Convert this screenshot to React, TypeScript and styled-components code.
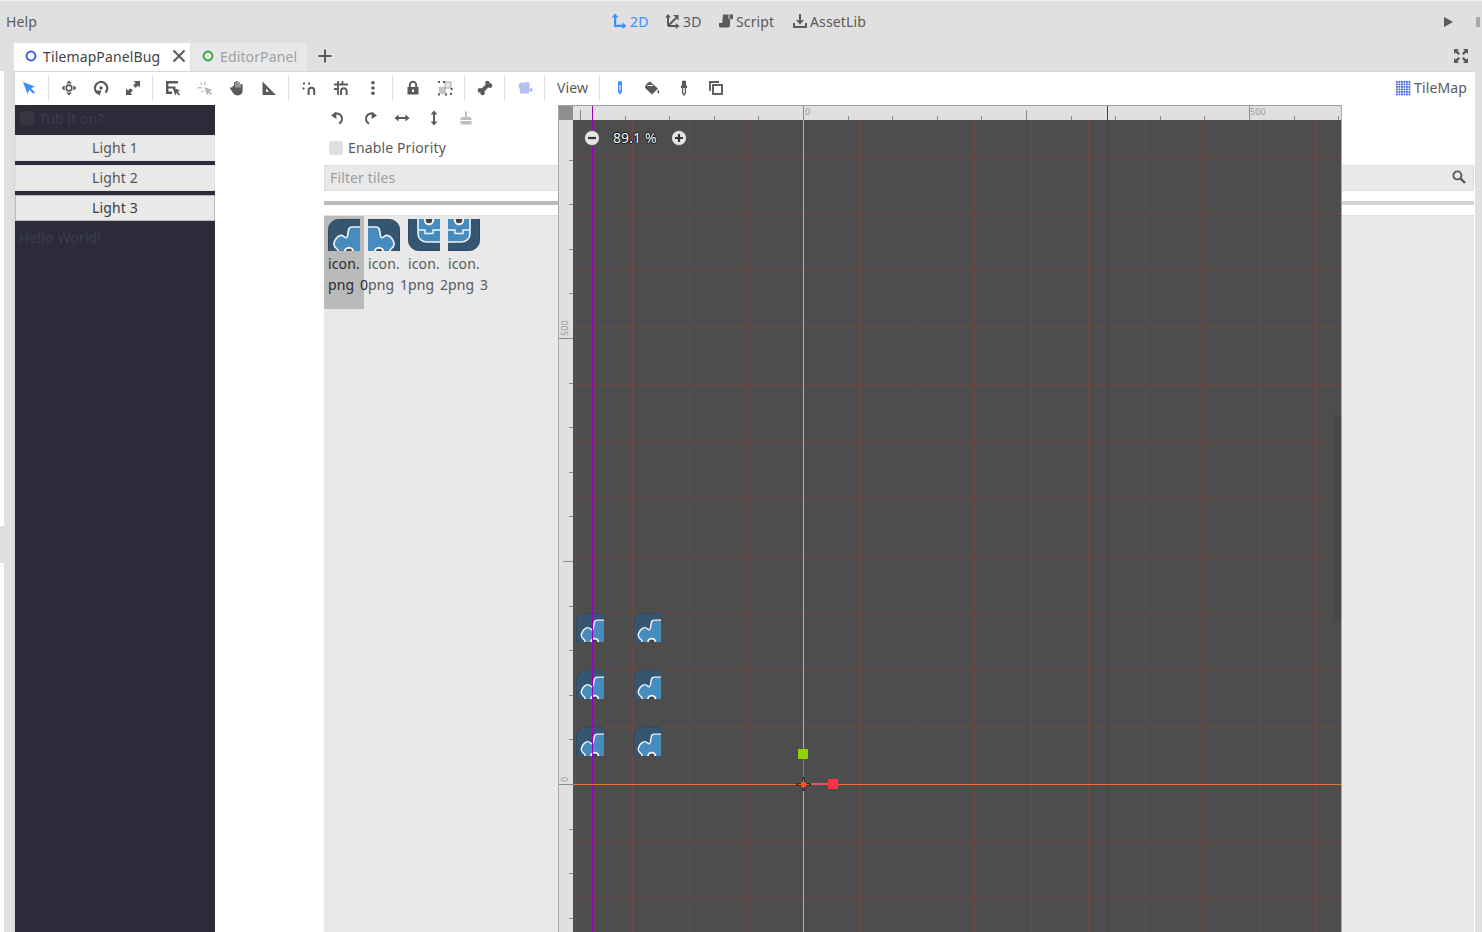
import React from "react";
import styled, { createGlobalStyle } from "styled-components";

const Global = createGlobalStyle`
  html, body { margin: 0; padding: 0; background: #e0e0e0; }
  body { font-family: "Noto Sans", "Liberation Sans", sans-serif; font-size: 14px; letter-spacing: 0.13px; color: #5a5a5a; overflow: hidden; }
`;

const Page = styled.div`
  width: 1482px; height: 932px; display: flex; flex-direction: column; overflow: hidden;
  background: #e0e0e0; border-top: 1px solid #f2f2f2; box-sizing: border-box;
`;
const MenuBar = styled.div`
  height: 42px; box-sizing: border-box; padding-bottom: 2px; display: grid; grid-template-columns: 611px auto 1fr; align-items: center; flex: none;
`;
const MenuLabel = styled.span`padding-left: 6px;`;
const Workspaces = styled.div`display: flex; align-items: center;`;
const Workspace = styled.div<{ $active?: boolean; $w: number }>`
  display: flex; align-items: center; gap: ${p => (p.$active ? 3 : 2)}px; width: ${p => p.$w}px; flex: none;
  color: ${p => (p.$active ? "#3d8dff" : "#5a5a5a")};
`;
const PlayArea = styled.div`display: flex; justify-content: flex-end; align-items: center; padding: 2px 2px 0 0; gap: 20px;`;
const ScrollStub = styled.div`width: 4px; height: 10px; background: #a8a8a8;`;

const TabBar = styled.div`height: 28px; display: flex; align-items: stretch; padding-left: 14px; flex: none;`;
const Tab = styled.div<{ $active?: boolean; $w: number }>`
  width: ${p => p.$w}px; display: flex; align-items: center; box-sizing: border-box; padding: 0 0 2px 11px; gap: 6px;
  background: ${p => (p.$active ? "#ffffff" : "#e8e8e8")};
  color: ${p => (p.$active ? "#444" : "#a0a0a0")};
  margin-right: 1px;
`;
const TabClose = styled.span`margin-left: 5px; display: flex;`;
const AddTab = styled.div`width: 34px; display: flex; align-items: center; justify-content: center; padding-bottom: 2px;`;
const Expand = styled.div`margin-left: auto; margin-right: 13px; display: flex; align-items: center; padding-bottom: 2px;`;

const Body = styled.div`flex: 1; display: flex; min-height: 0;`;
const DockStrip = styled.div`width: 4px; margin-right: 10px; display: flex; flex-direction: column; flex: none;`;
const DockWhite = styled.div<{ $h?: number }>`
  background: #ffffff;
  ${p => (p.$h ? `height: ${p.$h}px;` : "flex: 1;")}
`;
const DockTab = styled.div`background: #e0e0e0; height: 37px;`;
const Editor = styled.div`
  width: 1461px; background: #fff; border-top: 1px solid #d6d6d6; border-left: 1px solid #d6d6d6;
  display: flex; flex-direction: column; box-sizing: border-box;
`;
const Toolbar = styled.div`height: 33px; box-sizing: border-box; padding: 0 8px 2px 0; display: flex; align-items: center; flex: none;`;
const ToolButton = styled.div<{ $w?: number }>`
  width: ${p => p.$w ?? 32}px; height: 28px; display: flex; align-items: center; justify-content: center; flex: none;
`;
const LeadButton = styled(ToolButton)`width: 30px; box-sizing: border-box; padding-right: 2px;`;
const ToolSep = styled.div`width: 1px; height: 26px; background: #e2e2e2; margin: 0 4px 0 3px; flex: none;`;
const ViewMenu = styled.div`width: 47px; text-align: center; flex: none;`;
const NodeLabel = styled.div`margin-left: auto; display: flex; align-items: center; gap: 3px;`;

const MainRow = styled.div`flex: 1; display: flex; min-height: 0;`;
const GameView = styled.div`width: 200px; flex: none; background: #2b2b39; display: flex; flex-direction: column;`;
const GameCheck = styled.div`height: 26px; margin-bottom: 4px; display: flex; align-items: center; padding-left: 5px; gap: 5px; color: #3d3d49;`;
const GameBox = styled.div`width: 14px; height: 14px; border-radius: 3px; background: #363642;`;
const GameButton = styled.div<{ $hover?: boolean }>`
  height: 26px; margin-bottom: 4px; box-sizing: border-box; background: #e9e9e9; text-align: center; line-height: 24px;
  border: 1px solid ${p => (p.$hover ? "#bcbcbc" : "#e2e2e6")};
  color: ${p => (p.$hover ? "#3c3c3c" : "#555")};
`;
const Hello = styled.div`padding: 3px 4px; color: #3d3d49;`;
const Gutter = styled.div`width: 109px; flex: none;`;

const TilePanel = styled.div`flex: 1; margin-right: 1px; position: relative; display: flex; flex-direction: column; min-width: 0;`;
const IconRow = styled.div`height: 28px; margin: -1px 0 1px -2px; display: flex; align-items: center; flex: none;`;
const CheckRow = styled.div`height: 28px; margin-top: 1px; display: flex; align-items: center; gap: 5px; padding-left: 5px; flex: none;`;
const CheckBox = styled.div`width: 14px; height: 14px; border-radius: 3px; background: #e0e0e0;`;
const CheckText = styled.span`margin-top: -2px;`;
const Filter = styled.div`
  height: 26px; margin-top: 3px; box-sizing: border-box; background: #e9e9e9; border: 1px solid #dedede;
  display: flex; align-items: center; justify-content: space-between; padding: 0 6px 2px 5px; color: #9c9c9c; flex: none;
`;
const Split = styled.div`height: 4px; margin-top: 10px; background: linear-gradient(90deg, #bcbcbc 0, #bcbcbc 234px, #d4d4d4 234px); flex: none;`;
const ItemList = styled.div`
  flex: 1; margin-top: 10px; background: #e9e9e9; border-top: 1px solid #dedede;
  display: flex; align-items: flex-start;
`;
const Item = styled.div<{ $selected?: boolean }>`
  width: 40px; height: 93px; flex: none; box-sizing: border-box; padding: 3px 0 0 4px; white-space: nowrap; line-height: 21px; word-spacing: 2px;
  background: ${p => (p.$selected ? "#bababa" : "transparent")};
  color: ${p => (p.$selected ? "#2a2a2a" : "#5a5a5a")};
`;
const ItemPic = styled.div`height: 32px; margin-bottom: 2px;`;
const ItemLine = styled.div`height: 21px;`;

const Viewport = styled.div`position: absolute; left: 234px; top: 0; width: 784px; bottom: 0; background: #4d4d4d; overflow: hidden;`;
const CanvasArt = styled.svg`position: absolute; inset: 0; display: block;`;
const CanvasTile = styled.div<{ $x: number; $y: number }>`
  position: absolute; left: ${p => p.$x - 558}px; top: ${p => p.$y - 105}px; width: 28.5px; height: 28.5px;
`;
const Overdraw = styled.svg`position: absolute; inset: 0; display: block;`;
const ZoomBar = styled.div`position: absolute; left: 26px; top: 25px; display: flex; align-items: center; height: 16px;`;
const ZoomText = styled.span`
  width: 71px; padding: 0 0 1px 13px; box-sizing: border-box; color: #fff; letter-spacing: 0.1px;
  text-shadow: 1px 0 0 #111, -1px 0 0 #111, 0 1px 0 #111, 0 -1px 0 #111;
`;

const Svg: React.FC<{ s?: number; children: React.ReactNode }> = ({ s = 16, children }) => (
  <svg width={s} height={s} viewBox="0 0 16 16" style={{ display: "block" }}>{children}</svg>
);
const G = "#5a5a5a", BL = "#3d8dff";

const Arrow = () => <Svg><path d="M2 2 L14 6.4 L10 8.2 L14 12.2 L12.4 13.8 L8.4 9.8 L6.4 14 Z" fill={BL} /></Svg>;
const Move = () => <Svg><path d="M8 .5 L10.8 3.6 H5.2Z M8 15.5 L5.2 12.4 H10.8Z M.5 8 L3.6 5.2 V10.8Z M15.5 8 L12.4 10.8 V5.2Z" fill={G} /><circle cx="8" cy="8" r="2.8" fill="none" stroke={G} strokeWidth="1.7" /></Svg>;
const Rotate = () => <Svg><path d="M5.6 13.8 A6.2 6.2 0 1 1 12.4 12.6" fill="none" stroke={G} strokeWidth="2.2" /><path d="M1.5 10.6 L8.4 10.4 L6.6 15.6 Z" fill={G} /><circle cx="8" cy="8" r="1.7" fill={G} /></Svg>;
const Scale = () => <Svg><path d="M15 1 V7.4 L13 5.4 L10.6 7.8 L8.2 5.4 L10.6 3 L8.6 1Z M1 15 V8.6 L3 10.6 L5.4 8.2 L7.8 10.6 L5.4 13 L7.4 15Z" fill={G} /></Svg>;
const ListSelect = () => <Svg><path d="M1 1 H13 V3.4 H3.4 V6.4 H10.5 V8.6 H3.4 V11.6 H7 V14 H1Z" fill={G} /><path d="M7.6 7.4 L15.4 10.4 L12.6 11.6 L15 14.2 L13.8 15.4 L11.4 12.8 L10.2 15.6Z" fill={G} /></Svg>;
const GhostSelect = () => <Svg><path d="M.5 7 H5 V8.5 H.5Z M7 1.5 H8.5 V5 H7Z M3 3 L4 2.2 L5.6 4.4 L4.6 5.2Z M4 12 L5.6 10 L6.5 10.8 L5 13Z" fill="#c2c2c2" /><path d="M7.5 7 L15.4 10 L12.6 11.2 L15 13.8 L13.8 15 L11.4 12.4 L10 15.4Z" fill="#b4b4b4" /></Svg>;
const Hand = () => <Svg><path d="M3.4 6 Q4.6 5.2 5 6.2 V2.6 Q6 1.6 6.9 2.6 V1.4 Q7.9 .4 8.9 1.4 V2.4 Q9.9 1.6 10.9 2.6 V4.4 Q12.2 3.6 13.6 4.6 V10.6 Q13.6 15.4 8.6 15.4 Q5.2 15.4 3.8 12.8 L.8 8 Q1.6 6.6 3.4 7.8Z" fill={G} /><path d="M6.9 3 V7.6 M8.9 2 V7.6 M10.9 3 V7.6" stroke="#fff" strokeWidth=".7" /></Svg>;
const RulerI = () => <Svg><path fillRule="evenodd" d="M1.5 1.5 L15 15 H1.5Z M5 8.6 V11.8 H8.2Z" fill={G} /></Svg>;
const Snap = () => <Svg><path d="M2 2.5h2v2H2z M7 2.5h2v2H7z M1.5 7.5h2v2h-2z" fill={G} /><path d="M7.6 15 V10.5 A2.8 2.8 0 0 1 13.2 10.5 V15" fill="none" stroke={G} strokeWidth="2" /></Svg>;
const SnapGrid = () => <Svg><path d="M5 1v14 M9.5 1v4 M1 4.5h14 M1 9h5" stroke={G} strokeWidth="1.8" fill="none" /><path d="M8 15 V11 A2.8 2.8 0 0 1 13.6 11 V15" fill="none" stroke={G} strokeWidth="2" /></Svg>;
const Kebab = () => <Svg><circle cx="8" cy="2.8" r="1.8" fill={G} /><circle cx="8" cy="8" r="1.8" fill={G} /><circle cx="8" cy="13.2" r="1.8" fill={G} /></Svg>;
const Lock = () => <Svg><path d="M4.8 7 V5 A3.2 3.2 0 0 1 11.2 5 V7" fill="none" stroke={G} strokeWidth="1.9" /><path fillRule="evenodd" d="M2.5 7 H13.5 V14.5 H2.5Z M7 9.5 V12 H9 V9.5Z" fill={G} /></Svg>;
const Group = () => <Svg><rect x="2" y="7" width="7" height="7" fill="#c4c4c4" /><rect x="8" y="2" width="6" height="6" fill="#e6e6e6" stroke="#9a9a9a" strokeWidth=".8" /><path d="M1 1h2v2H1z M6 1h2v2H6z M13 13h2v2h-2z M1 13.6h2v2H1z M8 13.6h2v2H8z M13.6 8h2v2h-2z" fill={G} /></Svg>;
const Bone = () => <Svg><path d="M4.4 11.6 L11.6 4.4" stroke={G} strokeWidth="4" /><circle cx="3" cy="10.4" r="2.3" fill={G} /><circle cx="5.6" cy="13" r="2.3" fill={G} /><circle cx="10.4" cy="3" r="2.3" fill={G} /><circle cx="13" cy="5.6" r="2.3" fill={G} /></Svg>;
const Camera = () => <Svg><circle cx="5" cy="5.8" r="3.4" fill="#b3c2ee" /><circle cx="10" cy="5" r="3" fill="#b3c2ee" /><path d="M2.4 7 H12 V13.5 H3.4 Z M11.6 9 L15.5 7.5 V12 L11.6 11Z" fill="#b3c2ee" /></Svg>;
const Pencil = () => <Svg><path fillRule="evenodd" d="M6 1.5 Q8 .5 10 1.5 V11.5 L8 15 L6 11.5Z M7.4 5 V10.5 H8.6 V5Z" fill={BL} /></Svg>;
const Bucket = () => <Svg><path d="M6 1.5 L14 8.6 L8 14.5 L.8 7.8 Q2 3 6 1.5Z" fill={G} /><path d="M14 9.5 Q16.4 12.5 14.4 13.6 Q12.6 12.6 14 9.5Z" fill={G} /><path d="M3.4 5.5 L9 5.5 " stroke="#fff" strokeWidth="1" /></Svg>;
const Picker = () => <Svg><path d="M6 1 Q8 0 10 1 V5 L11 6 V8 H5 V6 L6 5Z" fill={G} /><path d="M6.6 8 V12.8 L8 15 L9.4 12.8 V8" fill="none" stroke={G} strokeWidth="1.3" /></Svg>;
const Copy = () => <Svg><path d="M2 11 V2 H11" fill="none" stroke={G} strokeWidth="1.8" /><rect x="5" y="5" width="9" height="9" fill="none" stroke={G} strokeWidth="1.9" /></Svg>;
const RotL = () => <Svg><path d="M4.4 4 A5.2 5.2 0 1 1 9 13.6" fill="none" stroke={G} strokeWidth="2" /><path d="M1 5.6 L6.4 1.6 V9Z" fill={G} /></Svg>;
const RotR = () => <Svg><path d="M11.6 4 A5.2 5.2 0 1 0 7 13.6" fill="none" stroke={G} strokeWidth="2" /><path d="M15 5.6 L9.6 1.6 V9Z" fill={G} /></Svg>;
const FlipH = () => <Svg><path d="M.5 8 L4.6 4.6 V7 H11.4 V4.6 L15.5 8 L11.4 11.4 V9 H4.6 V11.4Z" fill={G} /></Svg>;
const FlipV = () => <Svg><path d="M8 .5 L11.4 4.6 H9 V11.4 H11.4 L8 15.5 L4.6 11.4 H7 V4.6 H4.6Z" fill={G} /></Svg>;
const Brush = () => <Svg><path d="M7 1.5h2V7h3.5L14 10H2L3.5 7H7Z M2.5 11H13.5V14.5H2.5Z" fill="#bebebe" /></Svg>;
const TwoD = () => <Svg><path d="M4 .5 L7.4 4.6 H5.2 V11.8 H11.4 V9.6 L15.5 13 L11.4 16 V14 H3 V4.6 H.8Z" fill={BL} /></Svg>;
const ThreeD = () => <Svg><path d="M3 13 V4 M3 13 H11 M3 13 L11 5" stroke={G} strokeWidth="2" fill="none" /><path d="M3 1 L6 4.6 H0Z M14.5 13 L10.8 16 V10Z M13.6 2 V7.4 L8.2 2Z" fill={G} /></Svg>;
const Script = () => <Svg><path d="M5 1.5 H15 V6 H12 V12 Q12 14.5 9.5 14.5 H2.5 Q1 14.5 1 12.4 V10 H4.2Z" fill={G} /><path d="M11 1.5 V6" stroke="#e0e0e0" strokeWidth="1" /></Svg>;
const Asset = () => <Svg><path d="M7 1 H9 V7 H12 L8 11.4 L4 7 H7Z M1 10 H3 V13 H13 V10 H15 V15 H1Z" fill={G} /></Svg>;
const Play = () => <Svg><path d="M4 3 L13 8 L4 13Z" fill={G} /></Svg>;
const ExpandI = () => <Svg><path d="M1 1 H6 L4.4 2.6 L7 5.4 L5.4 7 L2.6 4.4 L1 6Z M15 1 V6 L13.4 4.4 L10.6 7 L9 5.4 L11.6 2.6 L10 1Z M1 15 V10 L2.6 11.6 L5.4 9 L7 10.6 L4.4 13.4 L6 15Z M15 15 H10 L11.6 13.4 L9 10.6 L10.6 9 L13.4 11.6 L15 10Z" fill={G} /></Svg>;
const Search = () => <Svg><circle cx="6.4" cy="6.4" r="4" fill="none" stroke={G} strokeWidth="1.9" /><path d="M9.4 9.4 L14 14" stroke={G} strokeWidth="2.4" /></Svg>;
const TileMapI = () => (
  <Svg>
    {[1, 3.5, 6, 8.5, 11, 13.5].map(y => [1, 3.5, 6, 8.5, 11, 13.5].map(x => (
      <rect key={`${x}-${y}`} x={x} y={y} width="1.8" height="1.8" fill="#3d64dd" />
    )))}
  </Svg>
);
const Ring: React.FC<{ c: string }> = ({ c }) => <Svg s={12}><circle cx="8" cy="8" r="6" fill="none" stroke={c} strokeWidth="2.6" /></Svg>;
const Close = () => <Svg><path d="M2.5 2.5 L13.5 13.5 M13.5 2.5 L2.5 13.5" stroke={G} strokeWidth="2" /></Svg>;
const Plus = () => <Svg><path d="M8 1.5 V14.5 M1.5 8 H14.5" stroke={G} strokeWidth="2" /></Svg>;
const ZoomMinus = () => <Svg><circle cx="8" cy="8" r="7.4" fill="#e6e6e6" stroke="#333" strokeWidth=".5" /><path d="M4 8 H12" stroke="#333" strokeWidth="2.2" /></Svg>;
const ZoomPlus = () => <Svg><circle cx="8" cy="8" r="7.4" fill="#e6e6e6" stroke="#333" strokeWidth=".5" /><path d="M4 8 H12 M8 4 V12" stroke="#333" strokeWidth="2.2" /></Svg>;

const Glyph: React.FC<{ qx: number; qy: number; size: number }> = ({ qx, qy, size }) => (
  <svg width={size} height={size} viewBox={`${qx * 32} ${qy * 32} 32 32`} style={{ display: "block" }}>
    <rect x=".5" y=".5" width="63" height="63" rx="10" fill="#355570" stroke="#2e4a62" />
    <path
      d="M32 8 H24 Q21 8 20.5 11 L19.5 17 Q18.5 20 16.5 18 Q14 15.5 11 17 Q7.5 19 6 24 Q5.5 27 8 29 L10 31 V46 Q10 55 20 55 H44 Q54 55 54 46 V31 L56 29 Q58.5 27 58 24 Q56.5 19 53 17 Q50 15.5 47.5 18 Q45.5 20 44.5 17 L43.5 11 Q43 8 40 8 Z"
      fill="#478cbf" stroke="#f0f4f8" strokeWidth="1.6" strokeLinejoin="round"
    />
    <path d="M10 43 H17 V46.5 H25 V43 H39 V46.5 H47 V43 H54" fill="none" stroke="#f0f4f8" strokeWidth="1.4" />
    <circle cx="21" cy="33" r="5.2" fill="#f0f4f8" />
    <circle cx="43" cy="33" r="5.2" fill="#f0f4f8" />
    <circle cx="21" cy="33" r="3.2" fill="#414042" />
    <circle cx="43" cy="33" r="3.2" fill="#414042" />
  </svg>
);

const hLines = [156, 213, 270, 327, 384, 441, 498, 556, 613, 670, 727, 841, 898];
const vLines = [575, 632, 689, 746, 860, 917, 974, 1031, 1088, 1145, 1202, 1259, 1316];
const topTicks = Array.from({ length: 18 }, (_, i) => i - 5).map(k => Math.round(803 + k * 44.6));
const leftTicks = Array.from({ length: 18 }, (_, i) => i - 14).map(k => Math.round(784 + k * 44.6));

const tiles = [575.5, 632.6].flatMap(x => [613.2, 670.3, 727.4].map(y => ({ x, y })));

const tools: React.ReactNode[][] = [
  [<Move />, <Rotate />, <Scale />],
  [<ListSelect />, <GhostSelect />, <Hand />, <RulerI />],
  [<Snap />, <SnapGrid />, <Kebab />],
  [<Lock />, <Group />],
  [<Bone />],
  [<Camera />],
];
const paints = [<Pencil />, <Bucket />, <Picker />, <Copy />];
const tileEdit = [<RotL />, <RotR />, <FlipH />, <FlipV />, <Brush />];
const tileItems = [
  { qx: 0, qy: 0, n: "png 0" }, { qx: 1, qy: 0, n: "png 1" }, { qx: 0, qy: 1, n: "png 2" }, { qx: 1, qy: 1, n: "png 3" },
];

export default function App() {
  return (
    <Page>
      <Global />
      <MenuBar>
        <MenuLabel>Help</MenuLabel>
        <Workspaces>
          <Workspace $active $w={54}><TwoD /><span>2D</span></Workspace>
          <Workspace $w={53}><ThreeD /><span>3D</span></Workspace>
          <Workspace $w={74}><Script /><span>Script</span></Workspace>
          <Workspace $w={76}><Asset /><span>AssetLib</span></Workspace>
        </Workspaces>
        <PlayArea><Play /><ScrollStub /></PlayArea>
      </MenuBar>
      <TabBar>
        <Tab $active $w={176}><Ring c="#3d64dd" /><span>TilemapPanelBug</span><TabClose><Close /></TabClose></Tab>
        <Tab $w={116}><Ring c="#3da83d" /><span>EditorPanel</span></Tab>
        <AddTab><Plus /></AddTab>
        <Expand><ExpandI /></Expand>
      </TabBar>
      <Body>
        <DockStrip>
          <DockWhite $h={455} />
          <DockTab />
          <DockWhite />
        </DockStrip>
        <Editor>
          <Toolbar>
            <LeadButton><Arrow /></LeadButton>
            {tools.map((g, i) => (
              <React.Fragment key={i}>
                <ToolSep />
                {g.map((t, j) => <ToolButton key={j}>{t}</ToolButton>)}
              </React.Fragment>
            ))}
            <ToolSep />
            <ViewMenu>View</ViewMenu>
            <ToolSep />
            {paints.map((t, j) => <ToolButton key={j}>{t}</ToolButton>)}
            <NodeLabel><TileMapI /><span>TileMap</span></NodeLabel>
          </Toolbar>
          <MainRow>
            <GameView>
              <GameCheck><GameBox /><span>Tub it on?</span></GameCheck>
              <GameButton>Light 1</GameButton>
              <GameButton>Light 2</GameButton>
              <GameButton $hover>Light 3</GameButton>
              <Hello>Hello World!</Hello>
            </GameView>
            <Gutter />
            <TilePanel>
              <IconRow>{tileEdit.map((t, j) => <ToolButton key={j}>{t}</ToolButton>)}</IconRow>
              <CheckRow><CheckBox /><CheckText>Enable Priority</CheckText></CheckRow>
              <Filter><span>Filter tiles</span><Search /></Filter>
              <Split />
              <ItemList>
                {tileItems.map((t, i) => (
                  <Item key={t.n} $selected={i === 0}>
                    <ItemPic><Glyph qx={t.qx} qy={t.qy} size={32} /></ItemPic>
                    <ItemLine>icon.</ItemLine>
                    <ItemLine>{t.n}</ItemLine>
                  </Item>
                ))}
              </ItemList>
              <Viewport>
                <CanvasArt width="784" height="827" viewBox="558 105 784 827">
                  {hLines.map(y => <rect key={y} x="573" y={y} width="769" height="1" fill="#6c4a41" />)}
                  {vLines.map(x => <rect key={x} x={x} y="120" width="1" height="812" fill="#6c4a41" />)}
                  <rect x="1333" y="415" width="8" height="207" fill="#484848" />
                </CanvasArt>
                {tiles.map(t => (
                  <CanvasTile key={`${t.x}-${t.y}`} $x={t.x} $y={t.y}><Glyph qx={0} qy={0} size={28.5} /></CanvasTile>
                ))}
                <Overdraw width="784" height="827" viewBox="558 105 784 827">
                  <rect x="559" y="106" width="783" height="14" fill="#e0e0e0" />
                  <rect x="559" y="106" width="14" height="826" fill="#e0e0e0" />
                  <rect x="559" y="106" width="14" height="14" fill="#8f8f8f" />
                  <rect x="558" y="105" width="784" height="1" fill="#a0a0a0" />
                  <rect x="558" y="105" width="1" height="827" fill="#a8a8a8" />
                  <rect x="1341" y="105" width="1" height="827" fill="#a8a8a8" />
                  {topTicks.map((x, i) => {
                    const k = i - 5;
                    const major = k % 10 === 0;
                    const mid = !major && k % 5 === 0;
                    const top = major ? 106 : mid ? 110 : 116;
                    return <rect key={x} x={x} y={top} width="1" height={120 - top} fill="#8a8a8a" />;
                  })}
                  {leftTicks.map((y, i) => {
                    const k = i - 14;
                    const major = k % 10 === 0;
                    const mid = !major && k % 5 === 0;
                    const left = major ? 559 : mid ? 563 : 569;
                    return <rect key={y} x={left} y={y} width={573 - left} height="1" fill="#8a8a8a" />;
                  })}
                  <g fontFamily="Noto Sans, sans-serif" fontSize="9" fill="#9a9a9a">
                    <text x="805" y="115">0</text>
                    <text x="1250" y="115">500</text>
                    <text transform="translate(568 336) rotate(-90)">500</text>
                    <text transform="translate(568 782) rotate(-90)">0</text>
                  </g>
                  <rect x="592" y="106" width="1" height="826" fill="#9a00c4" />
                  <rect x="1107" y="106" width="1" height="826" fill="#9a00c4" />
                  <rect x="803" y="120" width="1" height="812" fill="#c4c400" />
                  <rect x="559" y="784" width="14" height="1" fill="#8a8a8a" />
                  <rect x="573" y="784" width="768" height="1" fill="#e8702e" />
                  <rect x="803" y="759" width="1" height="25" fill="#6f9a20" />
                  <rect x="804" y="783" width="24" height="2" fill="#e0555f" />
                  <path d="M803.5 777 V791 M796 784.5 H811" stroke="#333" strokeWidth="3" />
                  <path d="M803.5 779 V789 M798 784.5 H809" stroke="#ff5522" strokeWidth="1" />
                  <circle cx="803.5" cy="784.5" r="2.8" fill="#ff5522" />
                  <rect x="798" y="749" width="10" height="10" fill="#8fd400" />
                  <rect x="828" y="779" width="10" height="10" fill="#ff3344" />
                </Overdraw>
                <ZoomBar>
                  <ZoomMinus />
                  <ZoomText>89.1 %</ZoomText>
                  <ZoomPlus />
                </ZoomBar>
              </Viewport>
            </TilePanel>
          </MainRow>
        </Editor>
      </Body>
    </Page>
  );
}
